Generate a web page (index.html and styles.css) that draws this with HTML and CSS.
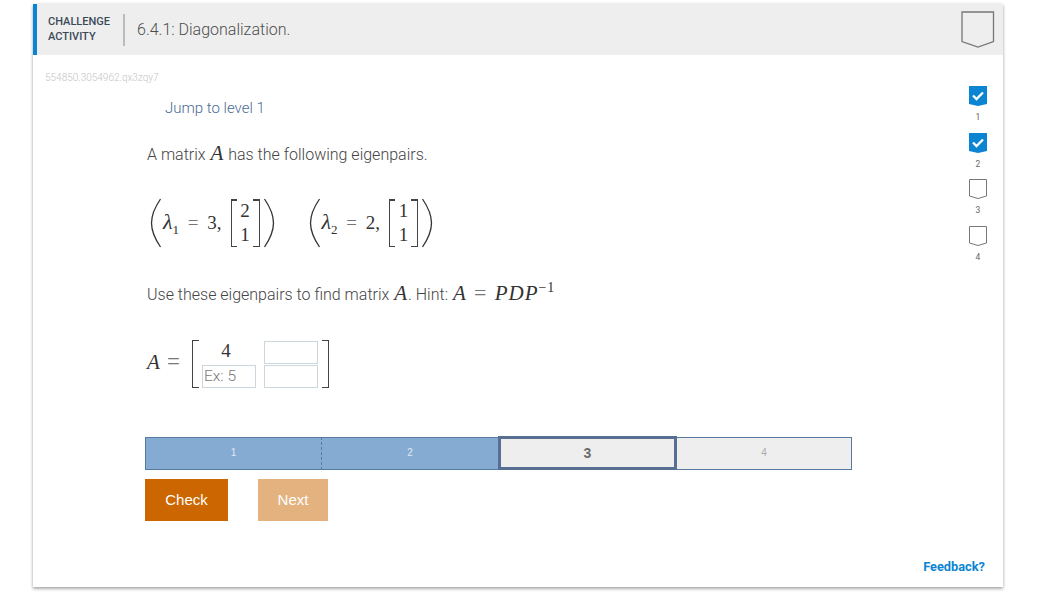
FILE: index.html
```html
<!DOCTYPE html>
<html lang="en">
<head>
<meta charset="utf-8">
<title>6.4.1: Diagonalization.</title>
<link rel="stylesheet" href="styles.css">
</head>
<body>
<main class="card">
  <header class="head">
    <div class="kind">CHALLENGE<br>ACTIVITY</div>
    <h1 class="title">6.4.1: Diagonalization.</h1>
    <svg class="shield" width="34" height="38" viewBox="0 0 34 38"><path d="M1 1H32.500V30.500L17 36L1 30.500Z" fill="none" stroke="#777" stroke-width="1.300"/></svg>
  </header>
  <div class="body">
    <div class="main">
      <div class="code">554850.3054962.qx3zqy7</div>
      <div class="jump">Jump to level 1</div>
      <p class="line first">A matrix <i class="m big">A</i> has the following eigenpairs.</p>
      <div class="pairs">
        <div class="pair">
          <svg class="paren" width="12" height="50" viewBox="0 0 12 50"><path d="M10.500 1C3 12 1.500 18 1.500 25S3 38 10.500 49" fill="none" stroke="#333" stroke-width="1.300"/></svg>
          <span class="m lam"><i>λ</i><sub>1</sub> <span class="eq">=</span> 3,</span>
          <div class="vec"><span>2</span><span>1</span></div>
          <svg class="paren" width="12" height="50" viewBox="0 0 12 50"><path d="M1.500 1C9 12 10.500 18 10.500 25S9 38 1.500 49" fill="none" stroke="#333" stroke-width="1.300"/></svg>
        </div>
        <div class="pair">
          <svg class="paren" width="12" height="50" viewBox="0 0 12 50"><path d="M10.500 1C3 12 1.500 18 1.500 25S3 38 10.500 49" fill="none" stroke="#333" stroke-width="1.300"/></svg>
          <span class="m lam"><i>λ</i><sub>2</sub> <span class="eq">=</span> 2,</span>
          <div class="vec"><span>1</span><span>1</span></div>
          <svg class="paren" width="12" height="50" viewBox="0 0 12 50"><path d="M1.500 1C9 12 10.500 18 10.500 25S9 38 1.500 49" fill="none" stroke="#333" stroke-width="1.300"/></svg>
        </div>
      </div>
      <p class="line second">Use these eigenpairs to find matrix <i class="m big">A</i>. Hint: <span class="m big hint"><i>A</i> <span class="eq">=</span> <i>PDP</i><sup>−1</sup></span></p>
      <div class="answer">
        <span class="m lhs"><i>A</i> <span class="eq">=</span></span>
        <div class="matrix">
          <span class="m given">4</span>
          <input class="cell" type="text" aria-label="row 1 column 2">
          <input class="cell" type="text" placeholder="Ex: 5" aria-label="row 2 column 1">
          <input class="cell" type="text" aria-label="row 2 column 2">
        </div>
      </div>
      <div class="levels">
        <div class="lvl done l1">1</div>
        <div class="lvl done l2">2</div>
        <div class="lvl current">3</div>
        <div class="lvl todo">4</div>
      </div>
      <div class="actions">
        <button class="btn check" type="button">Check</button>
        <button class="btn next" type="button">Next</button>
      </div>
    </div>
    <aside class="side">
      <div class="step"><svg width="18" height="20" viewBox="0 0 18 20"><path d="M0 0H18V18L9 20L0 18Z" fill="#0b85d1"/><path d="M4 9.500L7.500 13L14 6.500" fill="none" stroke="#fff" stroke-width="2.300"/></svg><span>1</span></div>
      <div class="step"><svg width="18" height="20" viewBox="0 0 18 20"><path d="M0 0H18V18L9 20L0 18Z" fill="#0b85d1"/><path d="M4 9.500L7.500 13L14 6.500" fill="none" stroke="#fff" stroke-width="2.300"/></svg><span>2</span></div>
      <div class="step"><svg width="18" height="20" viewBox="0 0 18 20"><path d="M.5 .5H17.500V17L9 19.500L.5 17Z" fill="none" stroke="#777"/></svg><span>3</span></div>
      <div class="step"><svg width="18" height="20" viewBox="0 0 18 20"><path d="M.5 .5H17.500V17L9 19.500L.5 17Z" fill="none" stroke="#777"/></svg><span>4</span></div>
    </aside>
  </div>
  <a class="feedback" href="#">Feedback?</a>
</main>
</body>
</html>
```
FILE: styles.css
```css
* { box-sizing: border-box; }
html, body { margin: 0; padding: 0; background: #fff; }
body { min-height: 597px; padding: 4px 40px 0 33px; font-family: Roboto, sans-serif; color: #555; }
.card {
  height: 583px;
  display: flex;
  flex-direction: column;
  background: #fff;
  box-shadow: 0 2px 3px rgba(0,0,0,.3), 0 0 3px rgba(0,0,0,.12);
}
.head {
  height: 51px;
  flex: none;
  display: flex;
  align-items: center;
  background: #eee;
  border-left: 4px solid #0b85d1;
  padding: 0 8px 0 11px;
}
.kind {
  width: 75px;
  height: 32px;
  font-size: 11px;
  font-weight: 500;
  line-height: 15px;
  color: #3c4a58;
}
.title {
  margin: 0;
  flex: 1;
  height: 32px;
  border-left: 2px solid #bbb;
  padding-left: 12px;
  font-size: 16px;
  font-weight: 300;
  line-height: 31px;
  color: #4d4d4d;
}
.shield { flex: none; margin-top: 1px; }
.body { flex: 1; display: flex; min-height: 0; }
.main { flex: 1; min-width: 0; padding: 17px 0 0 12px; }
.code { font-size: 10px; line-height: 12px; color: #c4c4c4; font-weight: 300; }
.jump { margin: 14px 0 0 120px; font-size: 15px; line-height: 20px; font-weight: 300; color: #4a6a94; }
.line { margin: 0 0 0 102px; font-size: 16px; font-weight: 300; line-height: 20px; color: #444; }
.first { margin-top: 27px; }
.second { margin-top: 37px; white-space: nowrap; }
.m { font-family: "Liberation Serif", "DejaVu Serif", serif; color: #333; font-weight: 400; }
.big { font-size: 21px; line-height: 0; margin: 0 1px; }
.hint { letter-spacing: 1px; word-spacing: 1px; }
.hint .eq { font-size: 22px; }
.hint sup { font-size: 14px; line-height: 0; font-style: normal; }
.eq { color: #777; }
.pairs { display: flex; gap: 34px; margin: 33px 0 0 105px; height: 50px; }
.pair { display: flex; align-items: center; }
.lam { font-size: 19px; margin: 0 9px 0 1px; white-space: nowrap; word-spacing: 4px; }
.lam i { font-size: 22px; line-height: 0; }
.lam sub { font-size: 13px; line-height: 0; }
.vec {
  width: 29px;
  height: 48px;
  border-left: 1.500px solid #444;
  border-right: 1.500px solid #444;
  display: flex;
  flex-direction: column;
  justify-content: space-around;
  align-items: center;
  font-family: "Liberation Serif", serif;
  font-size: 19px;
  line-height: 20px;
  color: #333;
  position: relative;
  margin-right: 3px;
}
.vec::before, .vec::after {
  content: "";
  position: absolute;
  left: 0;
  right: 0;
  height: 1.500px;
  background: linear-gradient(to right, #444 5px, transparent 5px, transparent 21px, #444 21px);
}
.vec::before { top: 0; }
.vec::after { bottom: 0; }
.answer { display: flex; align-items: center; margin: 34px 0 0 102px; height: 50px; }
.lhs { font-size: 21px; width: 45px; white-space: nowrap; margin-bottom: 3px; word-spacing: 2px; }
.lhs .eq { font-size: 23px; line-height: 0; }
.matrix {
  width: 137px;
  height: 48px;
  display: grid;
  grid-template-columns: 54px 54px;
  grid-template-rows: 23px 23px;
  column-gap: 8px;
  row-gap: 1px;
  padding: 0 0 0 10px;
  position: relative;
  align-content: center;
}
.matrix::before, .matrix::after {
  content: "";
  position: absolute;
  top: 0;
  bottom: 0;
  width: 6px;
  border: 1.500px solid #444;
}
.matrix::before { left: 0; border-right: 0; }
.matrix::after { right: 0; border-left: 0; }
.given { font-size: 19px; text-align: center; line-height: 20px; padding-right: 6px; }
.cell {
  width: 54px;
  height: 23px;
  padding: 0 1px;
  border: 1px solid #ccd6dd;
  background: #fff;
  font-family: Roboto, sans-serif;
  font-size: 15.500px;
  font-weight: 300;
  outline: 0;
}
.cell::placeholder { color: #777; opacity: 1; }
.levels {
  display: grid;
  grid-template-columns: 177px 176px 179px 175px;
  width: 707px;
  height: 32px;
  margin: 48px 0 0 100px;
  font-family: "Liberation Sans", Arial, sans-serif;
  font-size: 10px;
  text-align: center;
  line-height: 30px;
}
.lvl { border: 1px solid #567aa0; }
.done { background: #86abd2; color: #dfe8f2; }
.l1 { border-right: 1px dashed #567aa0; }
.l2 { border-left: 0; border-right: 0; }
.current {
  background: #eee;
  border: 3px solid #566f92;
  margin-top: -1px;
  height: 34px;
  font-size: 14px;
  font-weight: 700;
  color: #6b6b6b;
  line-height: 28px;
}
.todo { background: #eee; color: #aaa; border-left: 0; }
.actions { display: flex; gap: 30px; margin: 10px 0 0 100px; }
.btn {
  height: 42px;
  border: 0;
  padding: 0 0 2px;
  color: #fff;
  font-family: "Liberation Sans", Arial, sans-serif;
  font-size: 15px;
}
.check { width: 83px; background: #cc6600; }
.next { width: 70px; background: #e4b27f; }
.side { flex: none; width: 50px; padding-top: 31px; display: flex; flex-direction: column; align-items: center; gap: 6.500px; }
.step { display: flex; flex-direction: column; align-items: center; height: 40px; }
.step span { margin-top: 6px; font-size: 8.500px; line-height: 10px; color: #666; }
.feedback {
  align-self: flex-end;
  margin: 0 18px 12px 0;
  font-size: 12.800px;
  line-height: 16px;
  font-weight: 700;
  color: #0b85d1;
  text-decoration: none;
}
```
